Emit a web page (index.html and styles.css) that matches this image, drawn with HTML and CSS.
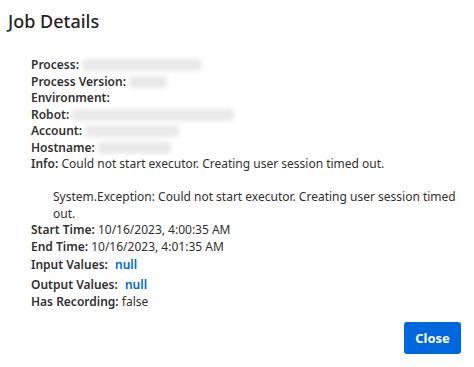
FILE: index.html
```html
<!DOCTYPE html>
<html>
    <head>
        <title>Job Details</title>
        <link rel="stylesheet" href="styles.css">
    </head>
  <body>
    <div class="dialog">
        <h2 class="title">Job Details</h2>
        <div class="details">
            <div class="row"><b>Process:</b> <span class="redacted w120"></span></div>
            <div class="row"><b>Process Version:</b> <span class="redacted w38"></span></div>
            <div class="row"><b>Environment:</b></div>
            <div class="row"><b>Robot:</b> <span class="redacted w162"></span></div>
            <div class="row"><b>Account:</b> <span class="redacted w94"></span></div>
            <div class="row"><b>Hostname:</b> <span class="redacted w73"></span></div>
            <div class="row"><b>Info:</b> Could not start executor. Creating user session timed out.</div>
            <div class="row blank"></div>
            <div class="row exception">System.Exception: Could not start executor. Creating user session timed out.</div>
            <div class="row"><b>Start Time:</b> 10/16/2023, 4:00:35 AM</div>
            <div class="row"><b>End Time:</b> 10/16/2023, 4:01:35 AM</div>
            <div class="row value-row"><b>Input Values:</b> <span class="null">null</span></div>
            <div class="row value-row"><b>Output Values:</b> <span class="null">null</span></div>
            <div class="row"><b>Has Recording:</b> false</div>
        </div>
        <div class="actions">
            <button class="close">Close</button>
        </div>
    </div>
  </body>
</html>
```

FILE: styles.css
```css
* {
    margin: 0;
    padding: 0;
    box-sizing: border-box;
}
body {
    font: 12px 'Noto Sans', 'Open Sans', sans-serif;
    color: #323130;
    background: #fff;
}
.dialog {
    width: 474px;
    padding: 8px 13px 0 8px;
}
.title {
    font-size: 18px;
    font-weight: 500;
    line-height: 26px;
    color: #252423;
}
.details {
    padding: 23px 0 0 23px;
    line-height: 16.5px;
}
.row b {
    font-weight: 600;
    color: #323130;
}
.blank {
    height: 16.5px;
}
.exception {
    padding-left: 22px;
}
.value-row {
    padding: 2px 0 1px;
}
.null {
    margin-left: 4px;
    color: #0067df;
    font-weight: 600;
}
.redacted {
    display: inline-block;
    height: 12px;
    vertical-align: -2px;
    background: #e9e9ea;
    border-radius: 4px;
    filter: blur(2px);
}
.w120 { width: 120px; }
.w38 { width: 38px; }
.w162 { width: 162px; }
.w94 { width: 94px; }
.w73 { width: 73px; }
.actions {
    display: flex;
    justify-content: flex-end;
    padding-top: 11px;
}
.close {
    width: 57px;
    height: 32px;
    border: 0;
    border-radius: 3px;
    background: #0067df;
    color: #fff;
    font: 700 13px 'Noto Sans', 'Open Sans', sans-serif;
    cursor: pointer;
}
```
